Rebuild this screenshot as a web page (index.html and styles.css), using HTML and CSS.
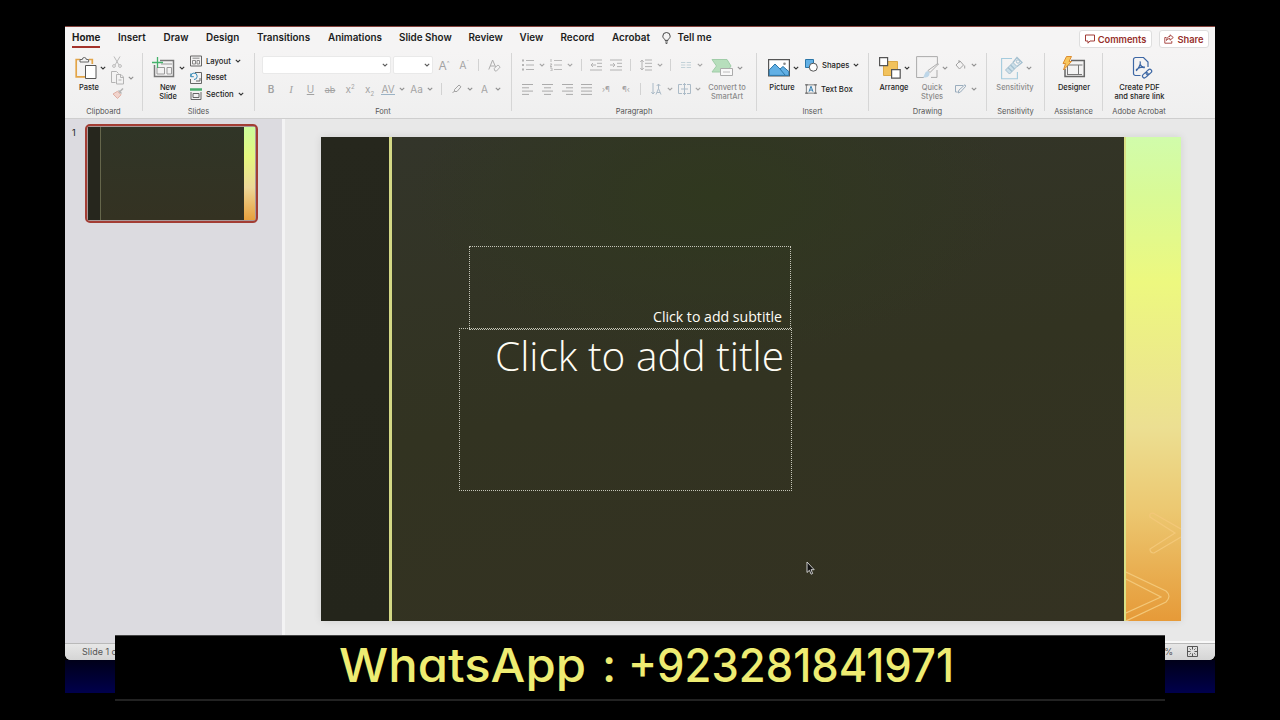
FILE: index.html
```
<!DOCTYPE html>
<html lang="en">
<head>
  <meta charset="UTF-8" />
  <meta name="viewport" content="width=device-width, initial-scale=1.0" />
  <title>Presentation</title>
  <link rel="stylesheet" href="styles.css">
</head>
<body>
  <svg class="defs" width="0" height="0">
    <symbol id="chev" viewBox="0 0 6 4"><path d="M.8.8 3 3 5.2.8" fill="none" stroke="currentColor" stroke-width="1.1"/></symbol>
  </svg>
  <div class="window">
    <header class="topbar">
      <nav class="tabs">
        <a class="active">Home</a>
        <a>Insert</a>
        <a>Draw</a>
        <a>Design</a>
        <a>Transitions</a>
        <a>Animations</a>
        <a>Slide Show</a>
        <a>Review</a>
        <a>View</a>
        <a>Record</a>
        <a>Acrobat</a>
        <svg width="9" height="12" viewBox="0 0 9 12" fill="none" stroke="#333" stroke-width=".9"><path d="M3 8.4C3 6.800.8 6.300.8 4.200a3.700 3.700 0 0 1 7.400 0C8.200 6.300 6 6.800 6 8.400zM3.200 10h2.600M3.700 11.400h1.600"/></svg>
        <a>Tell me</a>
      </nav>
      <div class="actions">
        <button class="comments"><svg width="10" height="10" viewBox="0 0 10 10" fill="none" stroke="#a03a35"><path d="M.5 1h9v6H5L3 9.200V7H.5z"/></svg>Comments</button>
        <button class="share"><svg width="10" height="10" viewBox="0 0 10 10" fill="none" stroke="#a03a35" stroke-width=".9"><path d="M2.500 3.500H.8v5.700h7V7M6 .8 9.300 3.500 6 6.200V4.600C4.300 4.600 3.200 5.200 2.500 6.500 2.600 4 4 2.500 6 2.400z"/></svg>Share</button>
      </div>
    </header>

    <div class="ribbon">
      <section class="group clipboard">
        <div class="group-body">
          <div class="big">
            <div class="big-icon">
              <svg width="22" height="24" viewBox="0 0 22 24" fill="none"><path d="M5 3.500H1.200v17.300H10M14 3.500h3.300V8" stroke="#e3a548" stroke-width="1.700"/><path d="M5 6V3.500h2.300a2 2 0 0 1 4 0h2.300V6z" fill="#f3f3f3" stroke="#666"/><path d="M10.500 9.500H21v13H10.500z" fill="#fff" stroke="#555"/></svg>
              <svg class="chev"><use href="#chev"/></svg>
            </div>
            <span>Paste</span>
          </div>
          <div class="small-col faded">
            <svg width="10" height="12" viewBox="0 0 10 12" fill="none" stroke="#777" stroke-width=".9"><path d="M2 .5 7 9M8 .5 3 9"/><circle cx="2" cy="10" r="1.400"/><circle cx="8" cy="10" r="1.400"/></svg>
            <div class="pair"><svg width="14" height="14" viewBox="0 0 14 14" fill="none" stroke="#777"><path d="M4.500 11.500h-4V.5h5l2 2M5.500 3.500h4.500l2.500 2.500v7h-7zM9.500 3.500v3h3M7.500 9h3"/></svg><svg class="chev"><use href="#chev"/></svg></div>
            <svg width="12" height="11" viewBox="0 0 12 11"><path d="m7 4.500 4-4M6.500 2.500l3 3" stroke="#777" fill="none" stroke-width="1.500"/><path d="M5.500 3.300 9 6.800 5.500 10.500 1 6z" fill="#f0b9aa" stroke="#cf6f58"/></svg>
          </div>
        </div>
        <div class="group-label">Clipboard</div>
      </section>

      <section class="group slides">
        <div class="group-body">
          <div class="big">
            <div class="big-icon">
              <svg width="24" height="24" viewBox="0 0 24 24" fill="none"><path d="M8 4.500h13.500v16H2.500V9" stroke="#777" stroke-width="1.500"/><path d="M5 11.500h7.500v6.500H5zM15 11.500h4.500V18H15zM9 8h11" stroke="#999"/><path d="M5.500 1v11M0 6.500h11" stroke="#45b26b" stroke-width="1.300"/></svg>
              <svg class="chev"><use href="#chev"/></svg>
            </div>
            <span>New<br>Slide</span>
          </div>
          <div class="list">
            <div><svg width="12" height="12" viewBox="0 0 12 12" fill="none" stroke="#666"><path d="M.5 1h11v10H.5z"/><path d="M2.500 5.500h3v3.500h-3zM7 5.500h2.500V9H7zM2.500 3.200h7" stroke="#888"/></svg>Layout<svg class="chev"><use href="#chev"/></svg></div>
            <div><svg width="12" height="12" viewBox="0 0 12 12" fill="none" stroke="#666"><path d="M5 .5h6.500v11H.5V7M6 9h4V6"/><path d="M.8 4.500A3.200 3.200 0 1 1 4 7.500M.8 1.500v3.200h3" stroke="#3389b7"/></svg>Reset</div>
            <div><svg width="12" height="12" viewBox="0 0 12 12" fill="none" stroke="#666"><path d="M0 1.500h12" stroke="#48ad6b" stroke-width="2.500"/><path d="M1 4v7.500h10V4M3 5.500h6v4H3z"/></svg>Section<svg class="chev"><use href="#chev"/></svg></div>
          </div>
        </div>
        <div class="group-label">Slides</div>
      </section>

      <section class="group font">
        <div class="group-body rows faded">
          <div class="row font-top">
            <div class="field"><svg class="chev"><use href="#chev"/></svg></div>
            <div class="field size"><svg class="chev"><use href="#chev"/></svg></div>
            <span class="grow">A<sup>^</sup></span>
            <span class="shrink">A<sup>ˇ</sup></span>
            <i class="bar"></i>
            <svg width="13" height="13" viewBox="0 0 13 13" fill="none" stroke="#666"><path d="M.8 10.500 4.600 1l3 7M2.200 7h4.500"/><path d="m6 9.500 4-3.500 2.200 2L8.500 12H7z" stroke="#777"/></svg>
          </div>
          <div class="row font-bottom">
            <b>B</b><em>I</em><u>U</u><s>ab</s>
            <span>x<sup>2</sup></span><span>x<sub>2</sub></span>
            <span class="kern">AV</span><svg class="chev"><use href="#chev"/></svg>
            <span>Aa</span><svg class="chev"><use href="#chev"/></svg>
            <i class="bar"></i>
            <svg width="10" height="10" viewBox="0 0 10 10" fill="none" stroke="#555"><path d="M2.500 5.500 7 1l2 1.800-4 4.700H2.500zM.5 9 2.500 7"/></svg><svg class="chev"><use href="#chev"/></svg>
            <span>A</span><svg class="chev"><use href="#chev"/></svg>
          </div>
        </div>
        <div class="group-label">Font</div>
      </section>

      <section class="group paragraph">
        <div class="group-body faded">
          <div class="rows">
            <div class="row para-top">
              <svg width="12" height="12" viewBox="0 0 12 12" stroke="#555"><path d="M0 1.500h2M0 6h2M0 10.500h2" stroke-width="2"/><path d="M4 1.500h8M4 6h8M4 10.500h8"/></svg><svg class="chev"><use href="#chev"/></svg>
              <svg width="12" height="12" viewBox="0 0 12 12" stroke="#555" fill="none"><path d="M4 1.500h8M4 6h8M4 10.500h8M1 0v3M0 5h2L0 7.500h2M0 9h2v3H0" stroke-width=".9"/></svg><svg class="chev"><use href="#chev"/></svg>
              <i class="bar"></i>
              <svg width="12" height="12" viewBox="0 0 12 12" stroke="#555" fill="none"><path d="M0 1h12M7 4.300h5M7 7.600h5M0 11h12M6 6H1M3 4 1 6l2 2"/></svg>
              <svg width="12" height="12" viewBox="0 0 12 12" stroke="#555" fill="none"><path d="M0 1h12M7 4.300h5M7 7.600h5M0 11h12M0 6h5M3 4l2 2-2 2"/></svg>
              <i class="bar"></i>
              <svg width="12" height="12" viewBox="0 0 12 12" stroke="#555" fill="none"><path d="M5 1h7M5 4.300h7M5 7.600h7M5 11h7M2 1v10M.3 3 2 1l1.700 2M.3 9 2 11l1.700-2"/></svg><svg class="chev"><use href="#chev"/></svg>
              <i class="bar"></i>
              <svg width="10" height="6" viewBox="0 0 10 6" stroke="#5d8ba0"><path d="M0 .5h4.300M5.700.5H10M0 3h4.300M5.700 3H10M0 5.500h4.300M5.700 5.500H10" stroke-width=".8"/></svg><svg class="chev"><use href="#chev"/></svg>
            </div>
            <div class="row para-bottom">
              <svg width="11" height="11" viewBox="0 0 11 11" stroke="#444"><path d="M0 .5h11M0 3.800h7M0 7.100h11M0 10.400h7"/></svg>
              <svg width="11" height="11" viewBox="0 0 11 11" stroke="#444"><path d="M0 .5h11M2 3.800h7M0 7.100h11M2 10.400h7"/></svg>
              <svg width="11" height="11" viewBox="0 0 11 11" stroke="#444"><path d="M0 .5h11M4 3.800h7M0 7.100h11M4 10.400h7"/></svg>
              <svg width="11" height="11" viewBox="0 0 11 11" stroke="#444"><path d="M0 .5h11M0 3.800h11M0 7.100h11M0 10.400h11"/></svg>
              <span class="mark">›¶</span><span class="mark">¶‹</span>
              <i class="bar"></i>
              <svg width="11" height="12" viewBox="0 0 11 12" stroke="#456b8b" fill="none"><path d="M2 0v11M.3 9 2 11l1.700-2M7.500 6V1M5.700 3l1.800-2 1.800 2M5 11.500l2.500-6 2.500 6M6 9.500h3"/></svg><svg class="chev"><use href="#chev"/></svg>
              <svg width="13" height="12" viewBox="0 0 13 12" stroke="#456b8b" fill="none"><path d="M4 1.500H.5v9H4M9 1.500h3.500v9H9M6.500 0v12M3 6h7M5 2l1.500-1.500L8 2M5 10l1.500 1.500L8 10"/></svg><svg class="chev"><use href="#chev"/></svg>
            </div>
          </div>
          <div class="big smartart">
            <div class="big-icon">
              <svg width="23" height="20" viewBox="0 0 23 20"><path d="M1 1.500h15l4 6.500-4 6H1l4.500-6z" fill="#7ccb87" stroke="#4ea75f"/><path d="M9.500 10.500h12v7h-12z" fill="#fff" stroke="#666"/><path d="M12 14h7" stroke="#888"/></svg>
              <svg class="chev"><use href="#chev"/></svg>
            </div>
            <span>Convert to<br>SmartArt</span>
          </div>
        </div>
        <div class="group-label">Paragraph</div>
      </section>

      <section class="group insert">
        <div class="group-body">
          <div class="big">
            <div class="big-icon">
              <svg width="22" height="18" viewBox="0 0 22 18"><path d="M.6.600h20.800v16.400H.6z" fill="#fff" stroke="#555" stroke-width="1.200"/><path d="M1.200 11 7 5l5 5 3-2.500 5.800 5v3.900H1.200z" fill="#62b0e5" stroke="#2b76a8"/><path d="m12 10 5 6" stroke="#2b76a8"/><circle cx="16.500" cy="4.700" r="1.300" fill="#888"/></svg>
              <svg class="chev"><use href="#chev"/></svg>
            </div>
            <span>Picture</span>
          </div>
          <div class="list">
            <div><svg width="13" height="13" viewBox="0 0 13 13"><path d="M.5.5h8v8h-8z" fill="#62b0e5" stroke="#2b76a8"/><circle cx="8.300" cy="8.200" r="4" fill="#fff" stroke="#555"/></svg>Shapes<svg class="chev"><use href="#chev"/></svg></div>
            <div><svg width="12" height="12" viewBox="0 0 13 12" fill="none"><path d="M1.500 1.500h10v9h-10z" stroke="#777"/><path d="M0 1.500h3M10 1.500h3M0 10.500h3M10 10.500h3" stroke="#555"/><path d="m4.300 9 2.200-6 2.200 6M5 7.200h3" stroke="#2c7aae"/></svg>Text Box</div>
          </div>
        </div>
        <div class="group-label">Insert</div>
      </section>

      <section class="group drawing">
        <div class="group-body">
          <div class="big">
            <div class="big-icon">
              <svg width="22" height="22" viewBox="0 0 22 22"><path d="M4.500 4.500h14v14h-14z" fill="#f2c25c" stroke="#dca947"/><path d="M.6.600h8v8h-8zM12.600 12.600h8.600v8.600h-8.600z" fill="#fff" stroke="#555" stroke-width="1.200"/></svg>
              <svg class="chev"><use href="#chev"/></svg>
            </div>
            <span>Arrange</span>
          </div>
          <div class="big quick faded">
            <div class="big-icon">
              <svg width="23" height="23" viewBox="0 0 23 23" fill="none"><path d="M8 21.500H.6V.6h20.800V8M21 14v7.400h-6" stroke="#666"/><path d="M22.500 8 14 16.500l-2-2L21 8z" stroke="#666"/><path d="M7 21.500c4 .5 7-1 6.500-5l-2-1.500c-3 1-2.500 4-4.500 6.500z" fill="#8abce0"/></svg>
              <svg class="chev"><use href="#chev"/></svg>
            </div>
            <span>Quick<br>Styles</span>
          </div>
          <div class="list faded">
            <div><svg width="11" height="10" viewBox="0 0 11 10" fill="none" stroke="#555"><path d="M1 5 5 1l3.500 4-4 4zM4 0v3M9.700 5.500v3"/></svg><svg class="chev"><use href="#chev"/></svg></div>
            <div><svg width="11" height="10" viewBox="0 0 11 10" fill="none" stroke="#456b8b"><path d="M8 1.500H.5V8h2M3 9l1-3 6-5.300.8 1.500L5.500 8z"/></svg><svg class="chev"><use href="#chev"/></svg></div>
          </div>
        </div>
        <div class="group-label">Drawing</div>
      </section>

      <section class="group sensitivity">
        <div class="group-body">
          <div class="big faded">
            <div class="big-icon">
              <svg width="22" height="24" viewBox="0 0 22 24" fill="none"><path d="M11 2.500H.6v20.300h15.800V16" stroke="#58a5c9" stroke-width="1.100"/><path d="m4.500 14 7.500-7.500 4 4L8.500 18z" fill="#a5cce0" stroke="#558dad"/><path d="m7 11.500 4 4M9.500 9l4 4M12 6.500l4-5 5 5-5 4" stroke="#558dad" stroke-width="1.300"/><circle cx="17" cy="5.500" r="1.700" stroke="#558dad"/></svg>
              <svg class="chev"><use href="#chev"/></svg>
            </div>
            <span>Sensitivity</span>
          </div>
        </div>
        <div class="group-label">Sensitivity</div>
      </section>

      <section class="group assistance">
        <div class="group-body">
          <div class="big">
            <div class="big-icon">
              <svg width="24" height="24" viewBox="0 0 24 24" fill="none"><path d="M9 4.500h13.300v16H3V13" stroke="#666" stroke-width="1.500"/><path d="M5.500 18V9h15M16.500 9v9.500M5 18.500h15" stroke="#777"/><path d="M4.500.500h5L7 5.500H9.500L1.500 14l2-6.500H1z" fill="#f7c65e" stroke="#dd8d30"/></svg>
            </div>
            <span>Designer</span>
          </div>
        </div>
        <div class="group-label">Assistance</div>
      </section>

      <section class="group acrobat">
        <div class="group-body">
          <div class="big">
            <div class="big-icon">
              <svg width="21" height="23" viewBox="0 0 21 23" fill="none" stroke="#3e68a5" stroke-width="1.200"><path d="M8.500 19.500h-5a2 2 0 0 1-2-2V3.500a2 2 0 0 1 2-2h8L16 6v5M7.700 5.500c1.200 0 .8 5-3.200 9-1.200-1.200 3-3.800 8.500-3.300M8 8c.4 1.500 2 3 4.500 4"/><g transform="rotate(-42 15 17.500)"><rect x="9.500" y="15.700" width="6.300" height="3.800" rx="1.900"/><rect x="14.200" y="15.700" width="6.300" height="3.800" rx="1.900"/></g></svg>
            </div>
            <span>Create PDF<br>and share link</span>
          </div>
        </div>
        <div class="group-label">Adobe Acrobat</div>
      </section>
    </div>

    <main class="workspace">
      <aside class="thumbs">
        <span class="num">1</span>
        <div class="thumb">
          <div class="thumb-edge"></div>
          <div class="thumb-body"></div>
          <div class="thumb-art"></div>
        </div>
      </aside>
      <div class="canvas">
        <div class="slide">
          <div class="edge"></div>
          <div class="slide-body"></div>
          <div class="art">
            <svg width="55" height="484" viewBox="0 0 55 484" fill="none" stroke="#f3c879" stroke-width="1.200"><path d="M55 392 27 376q-4 0-3 4l25 16-25 16q0 4 4 4l27-16"/><path d="M0 435l40 19q6 5 0 11L0 484M0 442l35 18L0 476"/></svg>
          </div>
          <div class="placeholder subtitle">
            <svg width="140" height="24"><text x="5" y="17" textLength="129" lengthAdjust="spacingAndGlyphs">Click to add subtitle</text></svg>
          </div>
          <div class="placeholder title">
            <svg width="300" height="60"><text x="5" y="41" textLength="289" lengthAdjust="spacingAndGlyphs">Click to add title</text></svg>
          </div>
          <svg class="cursor" width="9" height="14" viewBox="0 0 9 14"><path d="M1 1v10.500l2.400-2.200 1.700 3.900 1.600-.7L5 8.700h3.200z" fill="#111" stroke="#ddd" stroke-width=".9"/></svg>
        </div>
      </div>
    </main>
    <footer class="status">
      <span>Slide 1 of 1</span>
      <span class="zoom">100%</span>
      <svg width="11" height="11" viewBox="0 0 11 11" fill="none" stroke="#555"><path d="M.5.5h10v10H.5zM5.500 1v2.500M5.500 7.500V10M1 5.500h2.500M7.500 5.500H10"/><path d="m2.500 2.500 1.500 1.500M8.500 2.500 7 4M2.500 8.500 4 7M8.500 8.500 7 7" stroke-width=".8"/></svg>
    </footer>
  </div>
  <div class="desktop"></div>

  <div class="banner">
    <svg width="1050" height="62">
      <text x="224" y="46" textLength="247" lengthAdjust="spacingAndGlyphs">WhatsApp</text>
      <text x="487" y="46">:</text>
      <text x="513" y="46" textLength="326" lengthAdjust="spacingAndGlyphs">+923281841971</text>
    </svg>
  </div>
</body>
</html>
```
FILE: styles.css
```
* {
  box-sizing: border-box;
}
body {
  margin: 0;
  height: 720px;
  padding: 26px 65px 0;
  background: #000;
  font-family: Inter, "Liberation Sans", sans-serif;
  color: #222;
  overflow: hidden;
}
svg {
  display: block;
  flex: none;
}
.defs {
  position: absolute;
}
.window {
  width: 1150px;
  height: 634px;
  display: flex;
  flex-direction: column;
  background: #e8e8e8;
  border-top: 1px solid #84433d;
  border-radius: 0 0 6px 6px;
  overflow: hidden;
}

/* tabs */
.topbar {
  height: 25px;
  flex: none;
  display: flex;
  justify-content: space-between;
  padding-left: 7px;
  background: #f5f4f4;
}
.tabs {
  display: grid;
  grid-template-columns: 46px 45.5px 42.5px 51px 71px 71px 69.5px 51px 41px 51.5px 50px 15.500px 40px;
  align-items: center;
  font-size: 9.900px;
  font-weight: 600;
  height: 21px;
}
.tabs a {
  justify-self: start;
  line-height: 21px;
  white-space: nowrap;
  color: #1c1c1c;
}
.tabs .active {
  font-weight: 700;
  background: linear-gradient(#a3322b, #a3322b) left bottom / 100% 2px no-repeat;
}
.actions {
  display: flex;
  gap: 7px;
  padding: 3px 6px 0 0;
}
.actions button {
  display: flex;
  align-items: center;
  justify-content: center;
  gap: 3px;
  height: 18px;
  width: 73px;
  padding: 0;
  background: #fff;
  border: 1px solid #dedede;
  border-radius: 3px;
  color: #96302b;
  font: 600 9.3px Inter, sans-serif;
}
.actions .share {
  width: 50px;
}

/* ribbon */
.ribbon {
  height: 67px;
  flex: none;
  display: flex;
  padding-top: 1px;
  background: linear-gradient(#f5f4f4, #efefef);
  border-bottom: 1px solid #cecece;
}
.group {
  flex: none;
  background: linear-gradient(#d6d6d6, #d6d6d6) right top / 1px 58px no-repeat;
}
.clipboard { width: 78px; }
.slides { width: 112px; }
.font { width: 257px; }
.paragraph { width: 245px; }
.insert { width: 112px; }
.drawing { width: 118px; }
.sensitivity { width: 58px; }
.assistance { width: 58px; }
.acrobat {
  width: 73px;
  background: none;
}
.group-body {
  display: flex;
  height: 53px;
}
.group-label {
  text-align: center;
  font-size: 7.500px;
  line-height: 12px;
  color: #555;
  white-space: nowrap;
  padding-right: 1px;
}
.faded > * {
  opacity: .5;
}
.chev {
  width: 6px;
  height: 4px;
  color: #333;
}
.big {
  display: flex;
  flex-direction: column;
  align-items: center;
  font-size: 7.500px;
  font-weight: 500;
  line-height: 9px;
  text-align: center;
  white-space: nowrap;
  flex: none;
}
.big > span {
  margin-top: 1px;
}
.big-icon {
  height: 29px;
  display: flex;
  align-items: center;
  gap: 3px;
}
.list {
  display: flex;
  flex-direction: column;
  font-size: 7.700px;
  font-weight: 500;
  white-space: nowrap;
}
.list div {
  display: flex;
  align-items: center;
  gap: 4px;
}

.clipboard .big { margin-left: 10px; width: 31px; }
.clipboard .big > span { margin-right: 3px; }
.small-col {
  margin: 3px 0 0 5px;
  height: 43px;
  display: flex;
  flex-direction: column;
  justify-content: space-between;
}
.small-col > svg { margin-left: 1px; }
.pair {
  display: flex;
  align-items: center;
  gap: 3px;
}
.slides .big { margin-left: 8px; width: 34px; }
.slides .list {
  margin-left: 5px;
  height: 50px;
}
.slides .list div { height: 16.600px; }

.rows {
  flex-direction: column;
}
.row {
  display: grid;
  height: 24px;
  align-items: center;
  justify-items: center;
  font-size: 10px;
  color: #555;
}
.faded .row,
.rows.faded > * {
  opacity: 1;
}
.row span,
.row svg,
.row b,
.row em,
.row u,
.row s {
  opacity: .5;
}
.row b { font-weight: 600; }
.bar {
  width: 1px;
  height: 12px;
  background: #d2d2d2;
}
.field {
  width: 129px;
  height: 18px;
  display: flex;
  align-items: center;
  justify-content: flex-end;
  padding-right: 2px;
  background: #fff;
  border: 1px solid #e9e9e9;
  border-radius: 2px;
}
.field .chev { opacity: .8; }
.size {
  width: 40px;
  margin-left: 2px;
}
.font-top {
  grid-template-columns: 129px 42px 22px 18px 11px 20px;
  margin-left: 7px;
}
.font-bottom {
  grid-template-columns: 20px 20px 19px 20px 20px 19px 18px 10px 19px 8px 14px 18px 8px 21px 6px;
  margin-left: 6px;
}
.row sup,
.row sub {
  font-size: 6px;
  line-height: 0;
}
.grow { font-size: 12px; }
.shrink { font-size: 10.500px; }
.font-bottom em { font-family: "Liberation Serif", serif; font-size: 11px; }
.font-bottom s { font-size: 9px; }
.kern {
  line-height: 10px;
  border-bottom: 1px solid #47769b;
}
.para-top {
  grid-template-columns: 16px 11px 18px 10px 12px 18px 22px 7px 23px 6px 14px 18px 9px;
  margin-left: 8px;
}
.para-bottom {
  grid-template-columns: 19px 20px 20px 19px 20px 20px 9px 22px 5px 24px 4px;
  margin-left: 6px;
}
.paragraph .rows {
  width: 193px;
  opacity: 1;
}
.para-top svg,
.para-bottom svg { opacity: .4; }
.mark { font-size: 8px; }
.smartart { width: 44px; }

.insert .big { margin-left: 9px; width: 34px; }
.insert .big > span { margin-right: 2px; }
.insert .list { margin-left: 5px; }
.insert .list div,
.drawing .list div { height: 24px; }
.drawing .big { margin-left: 8px; width: 34px; }
.drawing .quick { margin-left: 4px; }
.drawing .list { margin-left: 6px; }
.drawing .list div { gap: 5px; }
.sensitivity .big,
.assistance .big,
.acrobat .big { width: 100%; }
.sensitivity .big > span { margin-right: 2px; }
.acrobat .big-icon { padding-left: 5px; }

/* slide area */
.workspace {
  flex: 1;
  display: flex;
  background: #e8e8e8;
}
.thumbs {
  width: 220px;
  display: flex;
  align-items: flex-start;
  padding: 5px 0 0 7px;
  background: #dcdbe0;
  border-right: 3px solid #f3f3f4;
}
.num {
  width: 13px;
  font-size: 9px;
  line-height: 17px;
}
.thumb {
  width: 173px;
  height: 99px;
  display: flex;
  border: 2px solid #a33d34;
  border-radius: 5px;
  padding: 1px;
  background: #a99;
  overflow: hidden;
}
.thumb-edge {
  width: 13px;
  background: #26261d;
  border-right: 1px solid #65664b;
}
.thumb-body {
  flex: 1;
  background: linear-gradient(#303527, #343222);
}
.thumb-art {
  width: 11px;
  background: linear-gradient(#ccfc9c, #e5f77e 32%, #edd798 65%, #e7a03c);
}
.canvas {
  flex: 1;
  padding: 18px 0 0 36px;
  border-bottom: 2px solid #f8f8f8;
}
.slide {
  position: relative;
  display: flex;
  width: 860px;
  height: 484px;
  box-shadow: 0 0 8px rgba(0, 0, 0, 0.1);
}
.edge {
  width: 71px;
  background: linear-gradient(#26271d, #24251b);
  border-right: 3px solid #d3d885;
}
.slide-body {
  width: 734px;
  background: radial-gradient(ellipse 300px 160px at 44% 12%, #30381f, transparent), linear-gradient(170deg, #33352a, #323321 50%, #343222);
  border-right: 2px solid #d9e086;
}
.art {
  width: 55px;
  background: linear-gradient(#d1fcab, #d9fa96 12%, #edf87f 30%, #ecdf92 60%, #ecc871 77%, #e69a38);
}
.placeholder {
  position: absolute;
  display: flex;
  border: 1px dotted #c4c5b8;
}
.placeholder text {
  font-family: "Open Sans", sans-serif;
  fill: #fffdf5;
}
.subtitle {
  left: 148px;
  top: 109px;
  width: 322px;
  height: 84px;
  align-items: flex-end;
  justify-content: flex-end;
  padding-right: 2px;
}
.subtitle text {
  font-size: 14.800px;
  font-weight: 450;
}
.title {
  left: 138px;
  top: 191px;
  width: 333px;
  height: 163px;
  justify-content: flex-end;
  padding: 1px 1px 0 0;
}
.title text {
  font-size: 41px;
  font-weight: 330;
}
.cursor {
  position: absolute;
  left: 485px;
  top: 424px;
}

/* bottom */
.status {
  height: 17px;
  flex: none;
  display: flex;
  align-items: center;
  padding: 0 17px 2px;
  background: linear-gradient(#e7e7e7, #d5d5d5);
  border-top: 1px solid #b9b9b9;
  font-size: 9px;
  color: #555;
}
.zoom {
  margin-left: auto;
  margin-right: 14px;
}
.desktop {
  height: 33px;
  background: linear-gradient(#000019, #00004c);
}
.banner {
  position: absolute;
  left: 115px;
  top: 635px;
  width: 1050px;
  height: 66px;
  background: #000;
  border-top: 1px solid #444;
  border-bottom: 2px solid #222;
}
.banner text {
  font-family: Inter, sans-serif;
  font-size: 47px;
  font-weight: 550;
  font-feature-settings: "cv11";
  fill: #eeec72;
}
```
